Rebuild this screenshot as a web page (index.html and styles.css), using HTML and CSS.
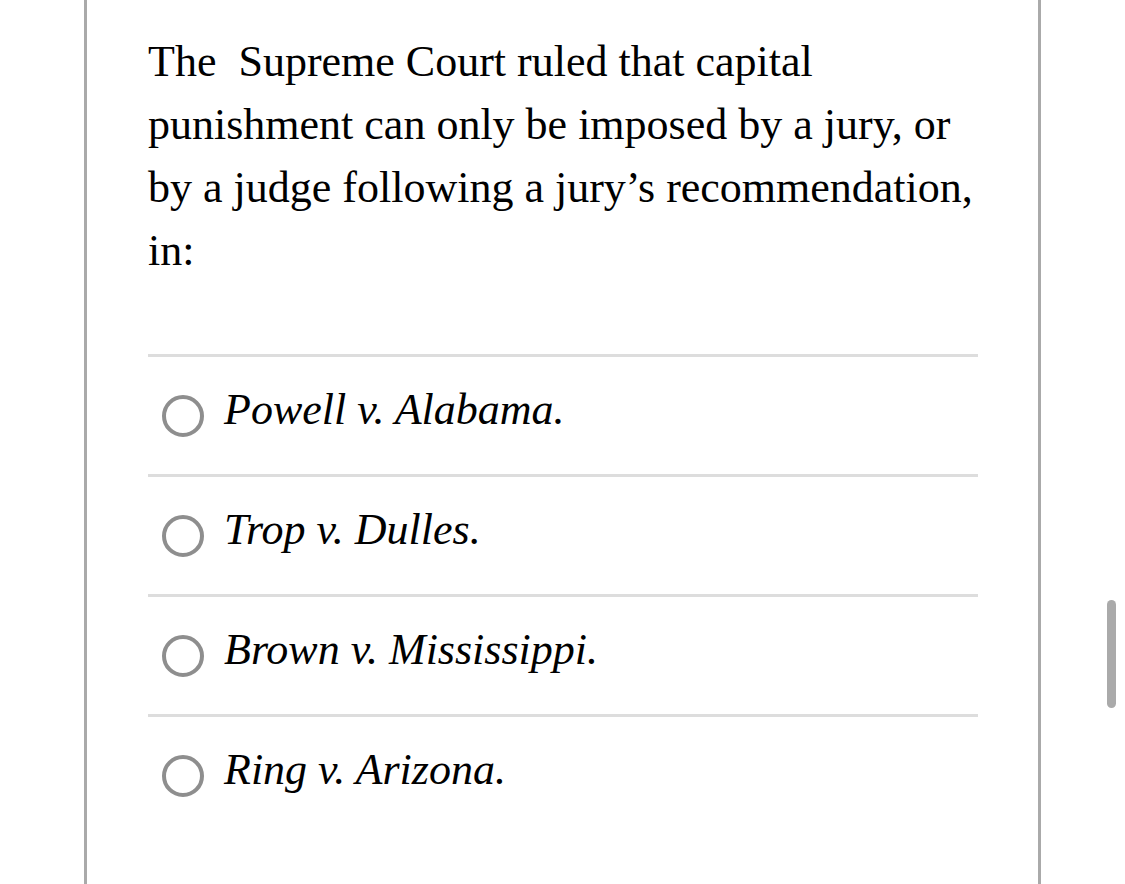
FILE: index.html
```html
<!DOCTYPE html>
<html lang="en">
<head>
    <meta charset="UTF-8">
    <title>Question</title>
    <link rel="stylesheet" href="styles.css">
</head>
<body>
    <div class="page">
        <p class="question">The&nbsp; Supreme Court ruled that capital punishment can only be imposed by a jury, or by a judge following a jury’s recommendation, in:</p>

        <div class="options">
            <label class="option">
                <span class="radio"></span>
                <span class="answer">Powell v. Alabama.</span>
            </label>
            <label class="option">
                <span class="radio"></span>
                <span class="answer">Trop v. Dulles.</span>
            </label>
            <label class="option">
                <span class="radio"></span>
                <span class="answer">Brown v. Mississippi.</span>
            </label>
            <label class="option">
                <span class="radio"></span>
                <span class="answer">Ring v. Arizona.</span>
            </label>
        </div>
    </div>
    <div class="scrollbar"></div>
</body>
</html>
```

FILE: styles.css
```css
html, body {
    margin: 0;
    height: 100%;
    background: #ffffff;
    overflow: hidden;
}
body {
    font-family: "Liberation Serif", "Times New Roman", serif;
    color: #000000;
}
.page {
    box-sizing: border-box;
    width: 957px;
    min-height: 884px;
    margin-left: 84px;
    padding: 30px 60px 0 61px;
    border-left: 3px solid #aaaaaa;
    border-right: 3px solid #aaaaaa;
}
.question {
    margin: 0;
    width: 830px;
    font-size: 44px;
    line-height: 63px;
}
.options {
    margin-top: 72px;
}
.option {
    display: flex;
    align-items: center;
    gap: 20px;
    height: 117px;
    padding-left: 14px;
    border-top: 3px solid #dddddd;
}
.radio {
    flex: none;
    box-sizing: border-box;
    width: 42px;
    height: 42px;
    border: 4px solid #8e8e8e;
    border-radius: 50%;
}
.answer {
    font-size: 44px;
    font-style: italic;
    line-height: 46px;
    margin-top: -12px;
}
.scrollbar {
    position: fixed;
    top: 600px;
    left: 1107px;
    width: 9px;
    height: 108px;
    border-radius: 5px;
    background: #aaaaaa;
}
```
